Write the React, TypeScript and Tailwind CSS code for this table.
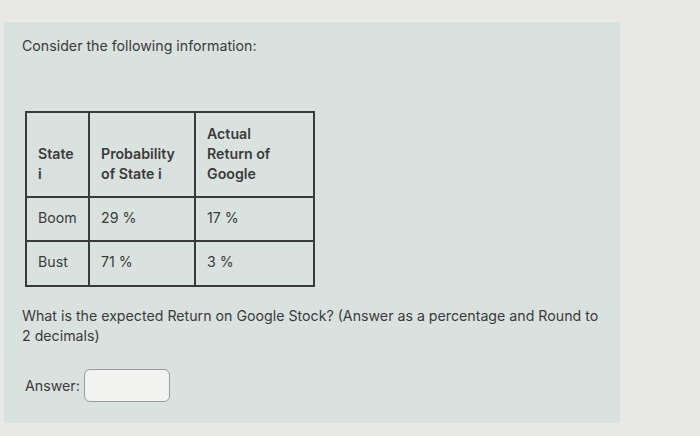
import React from "react";

export default function App() {
  const font = { fontFamily: 'Inter, "Liberation Sans", Arial, sans-serif' };
  const cell = "border-2 border-[#3a3a3a] px-[11px]";
  return (
    <div className="w-[700px] h-[436px] bg-[#e8e8e5] pt-[22px] overflow-hidden" style={font}>
      <div className="ml-[4px] w-[616px] h-[401px] bg-[#dae2e0] pl-[18px] pt-[14px] text-[#3a3a3a] text-[14.2px]">
        <div className="leading-[20px]">Consider the following information:</div>
        <table className="mt-[55px] ml-[3px] border-collapse border-2 border-[#3a3a3a]">
          <tbody>
            <tr className="h-[85px] font-semibold">
              <td className={`w-[63px] ${cell} align-bottom pb-[12px] leading-[20px]`}>State<br />i</td>
              <td className={`w-[106px] ${cell} align-bottom pb-[12px] leading-[20px]`}>Probability<br />of State i</td>
              <td className={`w-[119px] ${cell} align-bottom pb-[12px] leading-[20px]`}>Actual<br />Return of<br />Google</td>
            </tr>
            <tr className="h-[44px]">
              <td className={`${cell} pb-[3px]`}>Boom</td>
              <td className={`${cell} pb-[3px]`}>29 %</td>
              <td className={`${cell} pb-[3px]`}>17 %</td>
            </tr>
            <tr className="h-[45px]">
              <td className={`${cell} pb-[3px]`}>Bust</td>
              <td className={`${cell} pb-[3px]`}>71 %</td>
              <td className={`${cell} pb-[3px]`}>3 %</td>
            </tr>
          </tbody>
        </table>
        <div className="mt-[19px] leading-[20px] w-[580px]">
          What is the expected Return on Google Stock? (Answer as a percentage and Round to 2 decimals)
        </div>
        <div className="mt-[23px] ml-[3px] flex items-center gap-[4px]">
          <span>Answer:</span>
          <div className="w-[86px] h-[33px] rounded-[6px] border border-[#9a9a9a] bg-[#f2f2f0]" />
        </div>
      </div>
    </div>
  );
}
